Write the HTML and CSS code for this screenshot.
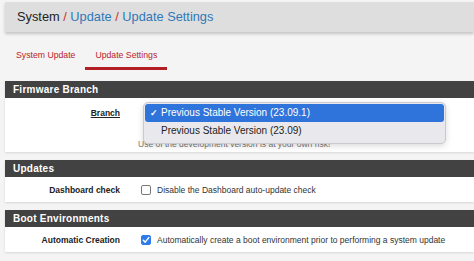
FILE: index.html
```html
<!DOCTYPE html>
<html lang="en">
<head>
    <meta charset="UTF-8">
    <title>System / Update / Update Settings</title>
    <link rel="stylesheet" href="styles.css">
</head>
<body>
    <div class="crumbs">
        System <span class="sep">/</span> <a>Update</a> <span class="sep">/</span> <a>Update Settings</a>
    </div>

    <ul class="tabs">
        <li>System Update</li>
        <li class="active">Update Settings</li>
    </ul>

    <div class="panel">
        <div class="panel-heading">Firmware Branch</div>
        <div class="panel-body branch-body">
            <div class="row">
                <div class="label"><u>Branch</u></div>
                <div class="field">
                    <div class="select-box"></div>
                    <div class="help">Use of the development version is at your own risk!</div>
                </div>
            </div>
            <!-- open select menu -->
            <div class="menu">
                <div class="menu-item selected"><span class="tick">✓</span>Previous Stable Version (23.09.1)</div>
                <div class="menu-item">Previous Stable Version (23.09)</div>
            </div>
        </div>
    </div>

    <div class="panel">
        <div class="panel-heading">Updates</div>
        <div class="panel-body">
            <div class="row">
                <div class="label">Dashboard check</div>
                <label class="check"><span class="box"></span>Disable the Dashboard auto-update check</label>
            </div>
        </div>
    </div>

    <div class="panel">
        <div class="panel-heading">Boot Environments</div>
        <div class="panel-body">
            <div class="row">
                <div class="label">Automatic Creation</div>
                <label class="check"><span class="box checked"><svg width="8" height="8" viewBox="0 0 8 8"><path d="M1.3 4.2 L3.2 6.1 L6.8 1.6" fill="none" stroke="#fff" stroke-width="1.5" stroke-linecap="round" stroke-linejoin="round"/></svg></span>Automatically create a boot environment prior to performing a system update</label>
            </div>
        </div>
    </div>
</body>
</html>
```

FILE: styles.css
```css
body {
    margin: 0;
    background-color: #f4f4f4;
    font-family: "Liberation Sans", Arial, sans-serif;
    color: #333;
    overflow: hidden;
}
.crumbs {
    margin: 2px 0 0 5px;
    height: 30px;
    line-height: 30px;
    padding-left: 12px;
    background: #dedede;
    box-shadow: 0 2px 3px rgba(0,0,0,0.2);
    font-size: 12.8px;
    color: #222;
    white-space: nowrap;
}
.crumbs a {
    color: #2f79b9;
}
.crumbs .sep {
    color: #c9302c;
}
.tabs {
    list-style: none;
    margin: 0 0 11px 0;
    padding: 15px 0 0 6px;
    display: flex;
    height: 23px;
    font-size: 8.7px;
    color: #b8242a;
}
.tabs li {
    padding: 0 10px;
    line-height: 16px;
    height: 20px;
    border-bottom: 3px solid transparent;
}
.tabs li.active {
    border-bottom-color: #b21f24;
}
.panel {
    margin: 0 0 8px 5px;
    background: #fff;
    box-shadow: 0 1px 2px rgba(0,0,0,0.12);
}
.panel-heading {
    background: #424242;
    color: #fff;
    font-weight: bold;
    font-size: 10px;
    letter-spacing: 0.25px;
    height: 17px;
    line-height: 17px;
    padding-left: 8px;
}
.panel-body {
    height: 25px;
    position: relative;
}
.branch-body {
    height: 54px;
}
.row {
    display: grid;
    grid-template-columns: 115px 1fr;
    column-gap: 21px;
    align-items: center;
    height: 100%;
}
.branch-body .row {
    align-items: start;
    padding-top: 9px;
}
.label {
    text-align: right;
    font-weight: bold;
    font-size: 8.5px;
    color: #222;
}
.branch-body .label {
    line-height: 12px;
}
.field {
    display: flex;
    flex-direction: column;
}
.select-box {
    height: 32px;
}
.help {
    font-size: 8.5px;
    color: #777;
    margin-left: -3px;
}
.check {
    display: flex;
    align-items: center;
    font-size: 8.5px;
    color: #333;
    white-space: nowrap;
}
.box {
    width: 8px;
    height: 8px;
    border: 1px solid #777;
    border-radius: 2px;
    margin-right: 6px;
    display: flex;
    align-items: center;
    justify-content: center;
}
.box.checked {
    background: #2f7bea;
    border-color: #2f7bea;
}
.menu {
    position: absolute;
    left: 138px;
    top: 4px;
    width: 299px;
    height: 38px;
    padding: 1px;
    background: #e9e9ed;
    border: 1px solid #c9c9cf;
    border-radius: 5px;
    box-shadow: 0 2px 6px rgba(0,0,0,0.15);
    font-size: 10px;
    color: #222;
}
.menu-item {
    height: 18px;
    line-height: 18px;
    padding-left: 16px;
    position: relative;
}
.menu-item.selected {
    background: #2f74da;
    color: #fff;
    border-radius: 3px;
}
.tick {
    position: absolute;
    left: 5px;
    font-size: 9px;
    font-weight: bold;
}
```
